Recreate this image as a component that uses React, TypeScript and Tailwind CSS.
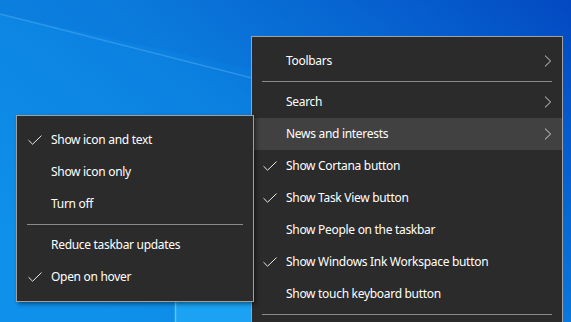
import React from "react";

type Item =
  | { kind: "sep" }
  | { kind: "item"; label: string; checked?: boolean; sub?: boolean; active?: boolean };

const MAIN_ITEMS: Item[] = [
  { kind: "item", label: "Toolbars", sub: true },
  { kind: "sep" },
  { kind: "item", label: "Search", sub: true },
  { kind: "item", label: "News and interests", sub: true, active: true },
  { kind: "item", label: "Show Cortana button", checked: true },
  { kind: "item", label: "Show Task View button", checked: true },
  { kind: "item", label: "Show People on the taskbar" },
  { kind: "item", label: "Show Windows Ink Workspace button", checked: true },
  { kind: "item", label: "Show touch keyboard button" },
  { kind: "sep" },
];

const NEWS_ITEMS: Item[] = [
  { kind: "item", label: "Show icon and text", checked: true },
  { kind: "item", label: "Show icon only" },
  { kind: "item", label: "Turn off" },
  { kind: "sep" },
  { kind: "item", label: "Reduce taskbar updates" },
  { kind: "item", label: "Open on hover", checked: true },
];

function Check() {
  return (
    <svg width="14" height="10" viewBox="0 0 14 10" fill="none">
      <path d="M0.5 5.2 L4.6 9.2 L13.5 0.6" stroke="#e8e8e8" strokeWidth="1" />
    </svg>
  );
}

function Chevron() {
  return (
    <svg width="8" height="12" viewBox="0 0 8 12" fill="none">
      <path d="M1 0.6 L6.6 6 L1 11.4" stroke="#d4d4d4" strokeWidth="1" />
    </svg>
  );
}

function MenuList({ items }: { items: Item[] }) {
  return (
    <div className="flex flex-col py-2">
      {items.map((item, i) =>
        item.kind === "sep" ? (
          <div key={i} className="py-1 mx-[10px]">
            <div className="h-px bg-[#8a8a8a]" />
          </div>
        ) : (
          <div
            key={i}
            className={`flex items-center h-8 ${item.active ? "bg-[#414141]" : ""}`}
          >
            <div className="w-[34px] pl-[11px] flex items-center">
              {item.checked && <Check />}
            </div>
            <span className="flex-1 text-[12px] tracking-[-0.3px] text-white whitespace-nowrap">
              {item.label}
            </span>
            {item.sub && (
              <div className="pr-[10px] flex items-center">
                <Chevron />
              </div>
            )}
          </div>
        )
      )}
    </div>
  );
}

function Wallpaper() {
  return (
    <svg className="absolute inset-0" width="571" height="322" viewBox="0 0 571 322">
      <defs>
        <linearGradient id="bg" x1="0" y1="0.7" x2="1" y2="0">
          <stop offset="0" stopColor="#0f90ea" />
          <stop offset="0.45" stopColor="#0b80e0" />
          <stop offset="0.8" stopColor="#055ccd" />
          <stop offset="1" stopColor="#0246bf" />
        </linearGradient>
        <linearGradient id="top" x1="0" y1="0" x2="1" y2="0">
          <stop offset="0" stopColor="#0a72d6" stopOpacity="0.35" />
          <stop offset="1" stopColor="#0a60cc" stopOpacity="0.1" />
        </linearGradient>
      </defs>
      <rect width="571" height="322" fill="url(#bg)" />
      <polygon points="0,0 571,0 571,140 0,14" fill="url(#top)" />
      <line x1="0" y1="14" x2="260" y2="80" stroke="#4aa8f2" strokeOpacity="0.55" strokeWidth="1.5" />
      <polygon points="175,292 260,292 260,322 175,322" fill="#1ba2f2" />
      <line x1="175.5" y1="292" x2="175.5" y2="322" stroke="#5cc4fa" strokeWidth="1.5" />
    </svg>
  );
}

export default function App() {
  return (
    <div
      className="relative w-[571px] h-[322px] overflow-hidden"
      style={{ fontFamily: '"Segoe UI", "Noto Sans", sans-serif' }}
    >
      <Wallpaper />

      {/* Taskbar context menu */}
      <div className="absolute left-[251px] top-[36px] w-[312px] bg-[#2b2b2b] border border-[#a0a0a0]">
        <MenuList items={MAIN_ITEMS} />
      </div>

      {/* News and interests submenu */}
      <div className="absolute left-[16px] top-[115px] w-[238px] bg-[#2b2b2b] border border-[#a0a0a0] shadow-[2px_2px_4px_rgba(0,0,0,0.45)]">
        <MenuList items={NEWS_ITEMS} />
      </div>
    </div>
  );
}
